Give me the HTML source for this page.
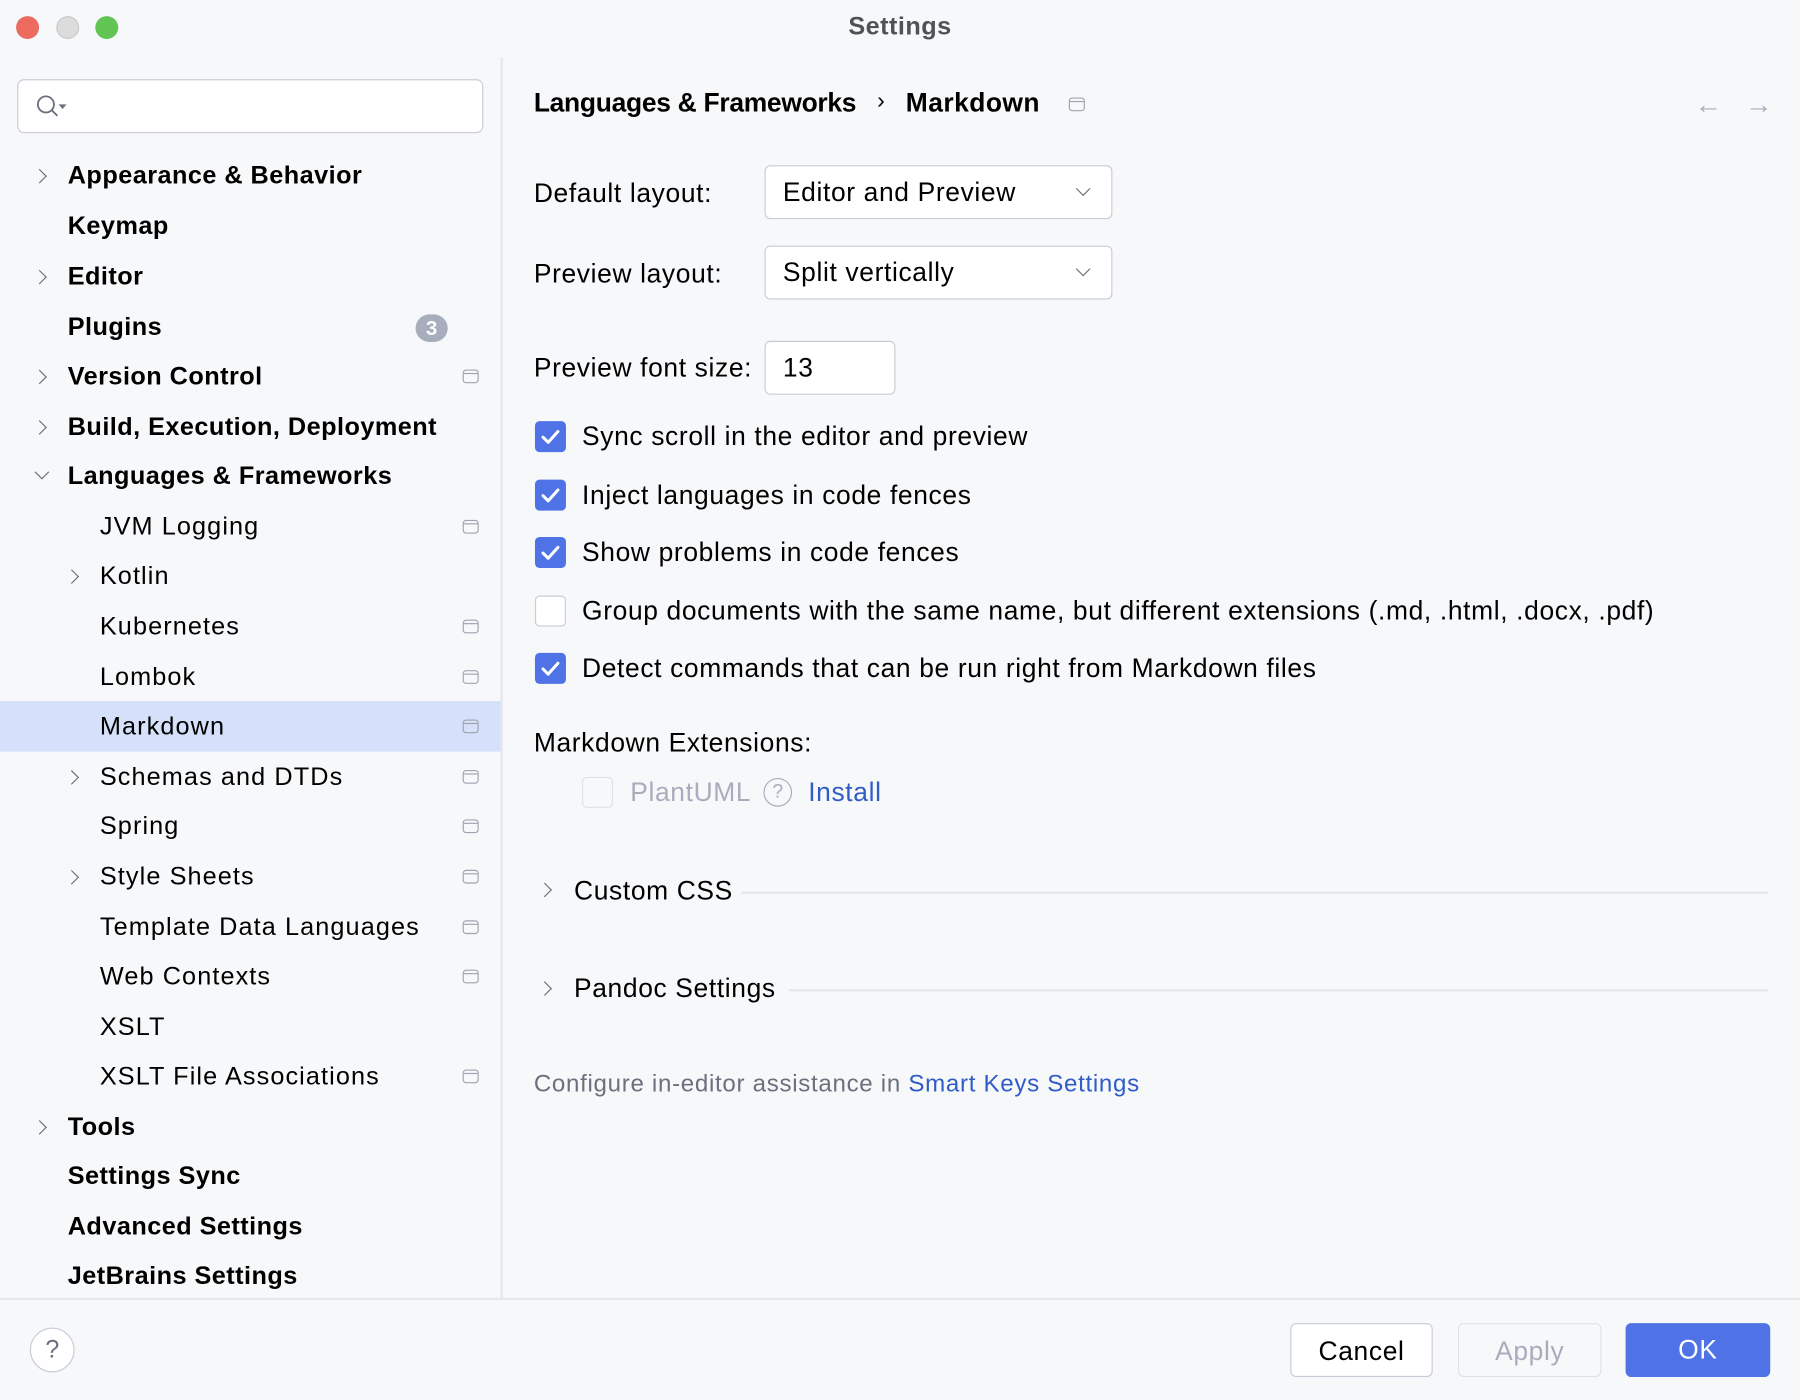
<!DOCTYPE html>
<html><head><meta charset="utf-8"><style>
*{box-sizing:border-box;margin:0;padding:0}
html,body{width:1800px;height:1400px;overflow:hidden;background:#f7f8fa}
#w{width:1568px;height:1220px;transform:scale(1.148,1.1475);transform-origin:0 0;position:relative;background:#f7f8fa;font-family:"Liberation Sans",sans-serif;color:#000;font-size:22px;letter-spacing:0.55px}
.a{position:absolute;white-space:nowrap}
.dot{position:absolute;top:14px;width:20px;height:20px;border-radius:50%}
.row{position:absolute;left:0;width:436px;height:44px;line-height:44px;letter-spacing:0.95px}
.row .t{position:absolute}
.b{font-weight:bold;letter-spacing:0.4px}
.chev{position:absolute;width:9px;height:9px;border-right:1.6px solid #6c707e;border-bottom:1.6px solid #6c707e;transform:rotate(-45deg)}
.pi{position:absolute;left:403px;width:14px;height:12px;border:1.5px solid #9ea3b0;border-radius:3px}
.pi:after{content:"";position:absolute;left:0;right:0;top:2px;border-top:1.5px solid #9ea3b0}
.cb{position:absolute;left:466px;width:27px;height:27px;border-radius:4px;background:#4f73e6}
.cb svg{position:absolute;left:4px;top:4px}
.btn{position:absolute;top:1153px;height:47px;border-radius:5px;text-align:center;line-height:47px;font-size:23px}
.combo{position:absolute;left:666px;width:303px;height:47px;background:#fff;border:1.5px solid #c9ccd6;border-radius:5px;line-height:44px;padding-left:15px;font-size:23px}
.combo .dd{position:absolute;right:20px;top:15px;width:9px;height:9px;border-right:1.5px solid #6c707e;border-bottom:1.5px solid #6c707e;transform:rotate(45deg)}
</style></head><body><div id="w">
<div class="dot" style="left:14px;background:#ec6a5e"></div>
<div class="dot" style="left:49px;background:#dcdcdc;border:1px solid #c8c8c8"></div>
<div class="dot" style="left:83px;background:#61c554"></div>
<div class="a b" style="left:0;width:1568px;text-align:center;top:10px;font-size:22px;color:#505258">Settings</div>
<div class="a" style="left:436px;top:50px;width:1.5px;height:1082px;background:#e6e7ea"></div>
<div class="a" style="left:15px;top:69px;width:406px;height:47px;background:#fff;border:1.5px solid #c9ccd6;border-radius:6px"></div>
<svg class="a" style="left:30px;top:81px" width="32" height="24"><circle cx="10" cy="10" r="7" fill="none" stroke="#6c707e" stroke-width="1.6"/><path d="M15 15l5 5" stroke="#6c707e" stroke-width="1.6"/><path d="M21 10h7l-3.5 4z" fill="#6c707e"/></svg>

<div class="row" style="top:131px"><div class="chev" style="left:30px;top:18px"></div><span class="t b" style="left:59px">Appearance &amp; Behavior</span></div>
<div class="row" style="top:175px"><span class="t b" style="left:59px">Keymap</span></div>
<div class="row" style="top:219px"><div class="chev" style="left:30px;top:18px"></div><span class="t b" style="left:59px">Editor</span></div>
<div class="row" style="top:263px"><span class="t b" style="left:59px">Plugins</span><div class="a" style="left:362px;top:11px;width:28px;height:24px;border-radius:12px;background:#a8adbd;color:#fff;font-size:18px;line-height:24px;text-align:center;font-weight:bold;letter-spacing:0">3</div></div>
<div class="row" style="top:306px"><div class="chev" style="left:30px;top:18px"></div><span class="t b" style="left:59px">Version Control</span><div class="pi" style="top:16px"></div></div>
<div class="row" style="top:350px"><div class="chev" style="left:30px;top:18px"></div><span class="t b" style="left:59px">Build, Execution, Deployment</span></div>
<div class="row" style="top:393px"><div class="chev" style="left:32px;top:14px;transform:rotate(45deg)"></div><span class="t b" style="left:59px">Languages &amp; Frameworks</span></div>
<div class="row" style="top:437px"><span class="t" style="left:87px">JVM Logging</span><div class="pi" style="top:16px"></div></div>
<div class="row" style="top:480px"><div class="chev" style="left:58px;top:18px"></div><span class="t" style="left:87px">Kotlin</span></div>
<div class="row" style="top:524px"><span class="t" style="left:87px">Kubernetes</span><div class="pi" style="top:16px"></div></div>
<div class="row" style="top:568px"><span class="t" style="left:87px">Lombok</span><div class="pi" style="top:16px"></div></div>
<div class="row" style="top:611px;background:#d5e0fa"><span class="t" style="left:87px">Markdown</span><div class="pi" style="top:16px"></div></div>
<div class="row" style="top:655px"><div class="chev" style="left:58px;top:18px"></div><span class="t" style="left:87px">Schemas and DTDs</span><div class="pi" style="top:16px"></div></div>
<div class="row" style="top:698px"><span class="t" style="left:87px">Spring</span><div class="pi" style="top:16px"></div></div>
<div class="row" style="top:742px"><div class="chev" style="left:58px;top:18px"></div><span class="t" style="left:87px">Style Sheets</span><div class="pi" style="top:16px"></div></div>
<div class="row" style="top:786px"><span class="t" style="left:87px">Template Data Languages</span><div class="pi" style="top:16px"></div></div>
<div class="row" style="top:829px"><span class="t" style="left:87px">Web Contexts</span><div class="pi" style="top:16px"></div></div>
<div class="row" style="top:873px"><span class="t" style="left:87px">XSLT</span></div>
<div class="row" style="top:916px"><span class="t" style="left:87px">XSLT File Associations</span><div class="pi" style="top:16px"></div></div>
<div class="row" style="top:960px"><div class="chev" style="left:30px;top:18px"></div><span class="t b" style="left:59px">Tools</span></div>
<div class="row" style="top:1003px"><span class="t b" style="left:59px">Settings Sync</span></div>
<div class="row" style="top:1047px"><span class="t b" style="left:59px">Advanced Settings</span></div>
<div class="row" style="top:1090px"><span class="t b" style="left:59px">JetBrains Settings</span></div>

<div class="a b" style="left:465px;top:76px;font-size:23px;letter-spacing:-0.25px">Languages &amp; Frameworks</div>
<div class="a" style="left:764px;top:77px;font-size:20px">›</div>
<div class="a b" style="left:789px;top:76px;font-size:23px">Markdown</div>
<div class="pi" style="left:931px;top:85px"></div>
<div class="a" style="left:1476px;top:78px;font-size:24px;color:#a8adbd">←</div>
<div class="a" style="left:1520px;top:78px;font-size:24px;color:#a8adbd">→</div>

<div class="a" style="left:465px;top:155px;font-size:23px">Default layout:</div>
<div class="combo" style="top:144px">Editor and Preview<div class="dd"></div></div>
<div class="a" style="left:465px;top:225px;font-size:23px">Preview layout:</div>
<div class="combo" style="top:214px">Split vertically<div class="dd"></div></div>
<div class="a" style="left:465px;top:307px;font-size:23px">Preview font size:</div>
<div class="combo" style="top:297px;width:114px">13</div>

<div class="cb" style="top:367px"><svg width="19" height="19"><path d="M3 10l4.5 4.5L16 5" fill="none" stroke="#fff" stroke-width="2.6" stroke-linecap="round" stroke-linejoin="round"/></svg></div>
<div class="a" style="left:507px;top:367px;font-size:23px">Sync scroll in the editor and preview</div>
<div class="cb" style="top:418px"><svg width="19" height="19"><path d="M3 10l4.5 4.5L16 5" fill="none" stroke="#fff" stroke-width="2.6" stroke-linecap="round" stroke-linejoin="round"/></svg></div>
<div class="a" style="left:507px;top:418px;font-size:23px">Inject languages in code fences</div>
<div class="cb" style="top:468px"><svg width="19" height="19"><path d="M3 10l4.5 4.5L16 5" fill="none" stroke="#fff" stroke-width="2.6" stroke-linecap="round" stroke-linejoin="round"/></svg></div>
<div class="a" style="left:507px;top:468px;font-size:23px">Show problems in code fences</div>
<div class="cb" style="top:519px;background:#fff;border:1.5px solid #c9ccd6"></div>
<div class="a" style="left:507px;top:519px;font-size:23px">Group documents with the same name, but different extensions (.md, .html, .docx, .pdf)</div>
<div class="cb" style="top:569px"><svg width="19" height="19"><path d="M3 10l4.5 4.5L16 5" fill="none" stroke="#fff" stroke-width="2.6" stroke-linecap="round" stroke-linejoin="round"/></svg></div>
<div class="a" style="left:507px;top:569px;font-size:23px">Detect commands that can be run right from Markdown files</div>

<div class="a" style="left:465px;top:634px;font-size:23px">Markdown Extensions:</div>
<div class="a" style="left:507px;top:677px;width:27px;height:27px;border:1.5px solid #dfe1e5;border-radius:4px"></div>
<div class="a" style="left:549px;top:677px;font-size:23px;color:#a8adbd">PlantUML</div>
<div class="a" style="left:665px;top:678px;width:25px;height:25px;border:1.5px solid #a8adbd;border-radius:50%;text-align:center;line-height:22px;font-size:17px;color:#a8adbd;letter-spacing:0">?</div>
<div class="a" style="left:704px;top:677px;font-size:23px;color:#2f5cc6">Install</div>

<div class="chev" style="left:470px;top:771px"></div>
<div class="a" style="left:500px;top:763px;font-size:23px">Custom CSS</div>
<div class="a" style="left:646px;top:777px;width:894px;height:1.5px;background:#e6e7ea"></div>
<div class="chev" style="left:470px;top:857px"></div>
<div class="a" style="left:500px;top:848px;font-size:23px">Pandoc Settings</div>
<div class="a" style="left:687px;top:862px;width:853px;height:1.5px;background:#e6e7ea"></div>

<div class="a" style="left:465px;top:933px;font-size:21px;color:#6c707e;letter-spacing:0.6px">Configure in-editor assistance in <span style="color:#2f5cc6">Smart Keys Settings</span></div>

<div class="a" style="left:0;top:1131px;width:1568px;height:1.5px;background:#e6e7ea"></div>
<div class="a" style="left:26px;top:1157px;width:39px;height:39px;border:1.5px solid #c9ccd6;border-radius:50%;background:#fff;text-align:center;line-height:36px;font-size:22px;color:#6c707e;letter-spacing:0">?</div>
<div class="btn" style="left:1124px;width:124px;background:#fff;border:1.5px solid #c9ccd6">Cancel</div>
<div class="btn" style="left:1270px;width:125px;border:1.5px solid #dfe1e5;color:#a8adbd">Apply</div>
<div class="btn" style="left:1416px;width:126px;background:#4f73e6;color:#fff">OK</div>
</div></body></html>
